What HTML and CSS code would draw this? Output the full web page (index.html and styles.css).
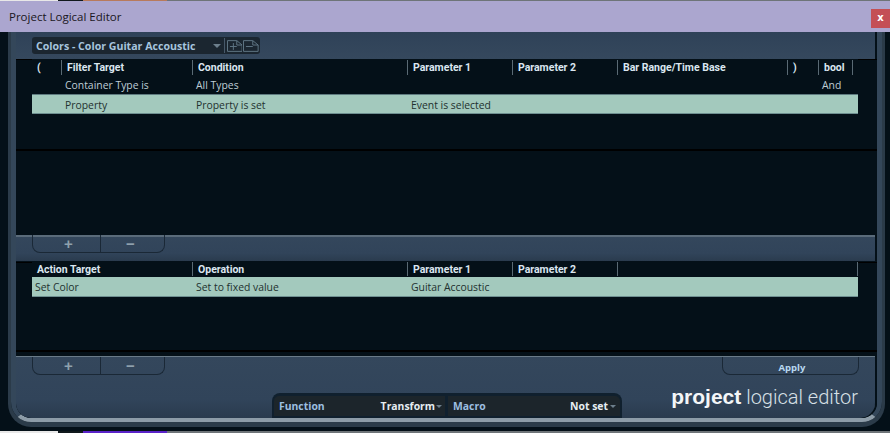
FILE: index.html
```html
<!DOCTYPE html>
<html lang="en">
<head>
<meta charset="utf-8">
<title>Project Logical Editor</title>
<link rel="stylesheet" href="styles.css">
</head>
<body>
<div class="strip strip-top"></div>
<header class="titlebar">
  <span class="title">Project Logical Editor</span>
  <span class="close">x</span>
</header>
<div class="frame">
  <div class="inner">
    <div class="toolbar">
      <div class="preset">
        <span class="preset-name">Colors - Color Guitar Accoustic</span>
        <span class="caret"></span>
        <span class="preset-sep"></span>
        <svg class="file-icon" width="16" height="12" viewBox="0 0 16 12"><path d="M.5.5H10L15.500 5v6.500H.5zM10 .5V5h5.500M3 6.500h7M6.500 3v7" fill="none" stroke="#5f7684"/></svg>
        <svg class="file-icon" width="16" height="12" viewBox="0 0 16 12"><path d="M.5.5H10L15.500 5v6.500H.5zM10 .5V5h5.500M3 6.500h7" fill="none" stroke="#5f7684"/></svg>
      </div>
    </div>

    <section class="table table-filter">
      <div class="row head cols-filter">
        <span class="cell">(</span><span class="cell sep">Filter Target</span><span class="cell sep">Condition</span><span class="cell sep">Parameter 1</span><span class="cell sep">Parameter 2</span><span class="cell sep">Bar Range/Time Base</span><span class="cell sep">)</span><span class="cell sep">bool</span><span class="cell sep"></span>
      </div>
      <div class="row body-row cols-filter">
        <span class="cell"></span><span class="cell">Container Type is</span><span class="cell">All Types</span><span class="cell"></span><span class="cell"></span><span class="cell"></span><span class="cell"></span><span class="cell">And</span><span class="cell"></span>
      </div>
      <div class="row body-row selected cols-filter">
        <span class="cell"></span><span class="cell">Property</span><span class="cell">Property is set</span><span class="cell">Event is selected</span><span class="cell"></span><span class="cell"></span><span class="cell"></span><span class="cell"></span><span class="cell"></span>
      </div>
    </section>
    <div class="table-empty"></div>

    <div class="bar bar-mid">
      <div class="tabs"><span class="tab tab-plus">+</span><span class="tab tab-minus">−</span></div>
    </div>

    <section class="table table-action">
      <div class="row head head-action cols-action">
        <span class="cell">Action Target</span><span class="cell sep">Operation</span><span class="cell sep">Parameter 1</span><span class="cell sep">Parameter 2</span><span class="cell sep"></span><span class="cell sep"></span>
      </div>
      <div class="row body-row selected selected-action cols-action">
        <span class="cell cell-first">Set Color</span><span class="cell">Set to fixed value</span><span class="cell">Guitar Accoustic</span><span class="cell"></span><span class="cell"></span><span class="cell"></span>
      </div>
    </section>

    <div class="bar bar-bottom">
      <div class="bar-buttons">
        <div class="tabs"><span class="tab tab-plus">+</span><span class="tab tab-minus">−</span></div>
        <div class="apply">Apply</div>
      </div>
      <div class="footer">
        <div class="selectors">
          <div class="selector selector-fn"><span class="sel-label">Function</span><span class="sel-value">Transform</span><span class="caret caret-small"></span></div>
          <div class="selector selector-macro"><span class="sel-label">Macro</span><span class="sel-value">Not set</span><span class="caret caret-small"></span></div>
        </div>
        <div class="logo"><b>project</b> logical editor</div>
      </div>
    </div>
  </div>
</div>
<div class="strip strip-bottom"></div>
</body>
</html>
```
FILE: styles.css
```css
* { box-sizing: border-box; }
html, body { margin: 0; padding: 0; }
body {
  width: 890px;
  height: 433px;
  overflow: hidden;
  background: #041018;
  font-family: "Open Sans", "Liberation Sans", sans-serif;
  font-size: 10.4px;
}
.strip { height: 1px; }
.strip-top {
  background: linear-gradient(90deg, #e8e8e8 0 58px, #10181c 58px 83px, #b87a5c 83px 167px, #6e7478 167px);
}
.titlebar {
  height: 31px;
  background: #aba6cf;
  display: flex;
  align-items: flex-start;
  justify-content: space-between;
  padding: 8px 0 0 9px;
}
.title { font-size: 11.5px; line-height: 16px; color: #1a1622; }
.close {
  width: 19px;
  height: 19px;
  background: #c44f55;
  color: #fff;
  font: bold 10px/18px "DejaVu Sans", sans-serif;
  text-align: center;
}
.frame {
  margin-left: 11px;
  width: 871px;
  height: 390px;
  border: 5px solid #34475a;
  border-top: 0;
  border-bottom: 4px solid #8d9ca8;
  border-radius: 0 0 20px 20px;
  box-shadow: 0 2px 0 3px #2b3b49;
  clip-path: inset(0 -4px -6px -4px);
}
.inner {
  height: 100%;
  border-radius: 0 0 15px 15px;
  overflow: hidden;
  display: flex;
  flex-direction: column;
  background: #041018;
}
.toolbar {
  height: 27px;
  flex: none;
  margin-right: 2px;
  background: linear-gradient(#2f4258, #35485d);
  padding: 5px 0 0 16px;
}
.preset {
  width: 228px;
  height: 17px;
  background: #1b2630;
  border-radius: 3px;
  display: flex;
  align-items: center;
  padding-left: 4px;
}
.preset-name {
  width: 180px;
  color: #a6c4de;
  font-weight: 700;
  font-size: 10.6px;
  white-space: nowrap;
}
.caret {
  width: 0;
  height: 0;
  border: 4px solid transparent;
  border-top: 4px solid #6d7f8c;
  border-bottom: 0;
  margin-left: 1px;
}
.preset-sep { width: 1px; height: 15px; background: #47596a; margin: 0 2px 0 3px; }
.file-icon { margin-right: 1px; }
.table { flex: none; background: #041018; box-shadow: inset 0 1px 0 #000; }
.table-filter { height: 90px; padding-left: 16px; }
.table-empty {
  flex: none;
  height: 86px;
  background: #041018;
  border-top: 2px solid #000;
}
.row { display: grid; width: 826px; }
.cols-filter { grid-template-columns: 29px 131px 215px 105px 105px 170px 31px 34px 6px; }
.cols-action { grid-template-columns: 160px 215px 105px 105px 240px 1px; }
.head {
  height: 17px;
  background: #041018;
  font-family: Roboto, "Liberation Sans", sans-serif;
  font-weight: 700;
  font-size: 10.5px;
  color: #dbe6f0;
}
.head-action { height: 15px; }
.head .cell { height: 15px; margin-top: 1px; line-height: 15px; padding-left: 5px; }
.head-action .cell { height: 14px; margin-top: 0; }
.head .sep { border-left: 1px solid #5a6a74; }
.body-row { height: 18px; color: #bfcdd6; }
.body-row .cell { padding-left: 4px; line-height: 18px; }
.selected {
  height: 20px;
  background: #a3c9bd;
  border-top: 1px solid #5f7b80;
  border-bottom: 1px solid #6e8f90;
  color: #22312f;
}
.selected-action { border-top: 0; }
.selected .cell { padding-left: 4px; line-height: 20px; }
.selected .cell-first { padding-left: 3px; }
.cell { white-space: nowrap; overflow: hidden; }
.bar {
  margin-right: 2px;
  background: linear-gradient(#34475c, #31445a 70%, #2a3b4e);
  box-shadow: inset 0 2px 0 #5a6b7a;
  flex: none;
}
.bar-mid { height: 26px; margin-bottom: 1px; padding-left: 16px; }
.tabs {
  display: flex;
  width: 133px;
  height: 18px;
  border: 1px solid #1a2836;
  border-top: 0;
  border-radius: 0 0 8px 8px;
}
.tab {
  color: #8fa1ae;
  font: bold 15px/18px "Liberation Sans", sans-serif;
  text-align: center;
}
.tab-plus { width: 67px; padding-left: 4px; }
.tab-minus { border-left: 1px solid #1a2836; flex: 1; padding-right: 4px; }
.table-action { height: 90px; padding-left: 16px; border-bottom: 2px solid #000; }
.bar-bottom {
  flex: 1;
  margin-top: 4px;
  display: flex;
  flex-direction: column;
  border-radius: 0 0 15px 0;
  box-shadow: inset 0 1px 0 #6a7b88;
}
.bar-buttons { display: flex; justify-content: space-between; padding: 1px 16px 0; height: 19px; flex: none; }
.apply {
  width: 137px;
  height: 18px;
  border: 1px solid #1a2836;
  border-top: 0;
  border-radius: 0 0 8px 8px;
  color: #b8d8f0;
  font-weight: 700;
  font-size: 9.5px;
  line-height: 22px;
  padding-left: 3px;
  text-align: center;
}
.footer {
  flex: 1;
  display: flex;
  align-items: flex-end;
  justify-content: space-between;
  padding-left: 256px;
  padding-right: 17px;
}
.selectors {
  width: 350px;
  height: 25px;
  background: #10202e;
  border-radius: 8px 8px 0 0;
  padding: 3px 2px 2px;
  display: flex;
  gap: 3px;
}
.selector {
  flex: 1;
  background: #1c252b;
  border-radius: 5px 0 0 0;
  display: flex;
  align-items: center;
  padding: 0 3px 0 5px;
  font-weight: 700;
  font-size: 10.4px;
}
.selector-macro { border-radius: 0 5px 0 0; padding-right: 4px; }
.selector-macro .caret { margin-left: 2px; }
.sel-label { color: #9cbfe0; flex: 1; }
.sel-value { color: #e6edf2; }
.caret-small { border-width: 3px; border-top-width: 3px; border-bottom-width: 0; border-top-color: #6d7f8c; margin-left: 1px; }
.logo {
  font-family: Roboto, "Liberation Sans", sans-serif;
  font-weight: 300;
  font-size: 20px;
  line-height: 24px;
  color: #d8e0e6;
  margin-bottom: 9px;
  white-space: nowrap;
}
.logo b { font-family: "Liberation Sans", sans-serif; font-size: 21px; font-weight: 700; color: #f4f6f8; }
.strip-bottom {
  margin-top: 9px;
  height: 2px;
  background: linear-gradient(90deg, #e8e8e8 0 58px, #10181c 58px 83px, #5a22c8 83px 167px, #6e7478 167px);
}
```
